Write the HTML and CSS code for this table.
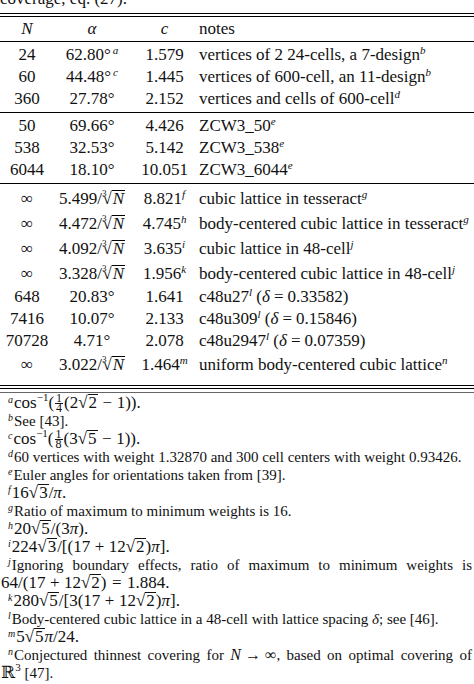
FILE: index.html
```html
<!DOCTYPE html>
<html lang="en">
<head>
<meta charset="utf-8">
<title>Table</title>
<link rel="stylesheet" href="styles.css">
</head>
<body>
<div class="page">
  <p class="caption">coverage, eq. (27).</p>
  <div class="rule-double"></div>
  <div class="row head">
    <span class="cn"><i>N</i></span><span class="ca"><i>α</i></span><span class="cc"><i>c</i></span><span class="cnotes">notes</span>
  </div>
  <div class="rule"></div>

  <div class="group">
    <div class="row"><span class="cn">24</span><span class="ca">62.80°<sup class="s sm">a</sup></span><span class="cc">1.579</span><span class="cnotes">vertices of 2 24-cells, a 7-design<sup class="s">b</sup></span></div>
    <div class="row"><span class="cn">60</span><span class="ca">44.48°<sup class="s sm">c</sup></span><span class="cc">1.445</span><span class="cnotes">vertices of 600-cell, an 11-design<sup class="s">b</sup></span></div>
    <div class="row"><span class="cn">360</span><span class="ca">27.78°</span><span class="cc">2.152</span><span class="cnotes">vertices and cells of 600-cell<sup class="s">d</sup></span></div>
  </div>
  <div class="rule"></div>

  <div class="group">
    <div class="row"><span class="cn">50</span><span class="ca">69.66°</span><span class="cc">4.426</span><span class="cnotes">ZCW3_50<sup class="s">e</sup></span></div>
    <div class="row"><span class="cn">538</span><span class="ca">32.53°</span><span class="cc">5.142</span><span class="cnotes">ZCW3_538<sup class="s">e</sup></span></div>
    <div class="row"><span class="cn">6044</span><span class="ca">18.10°</span><span class="cc">10.051</span><span class="cnotes">ZCW3_6044<sup class="s">e</sup></span></div>
  </div>
  <div class="rule"></div>

  <div class="group">
    <div class="row tall"><span class="cn">∞</span><span class="ca">5.499/<span class="root"><span class="idx">3</span><span class="rs">√</span><span class="rad"><i>N</i></span></span></span><span class="cc">8.821<sup class="s">f</sup></span><span class="cnotes">cubic lattice in tesseract<sup class="s">g</sup></span></div>
    <div class="row tall"><span class="cn">∞</span><span class="ca">4.472/<span class="root"><span class="idx">3</span><span class="rs">√</span><span class="rad"><i>N</i></span></span></span><span class="cc">4.745<sup class="s">h</sup></span><span class="cnotes">body-centered cubic lattice in tesseract<sup class="s">g</sup></span></div>
    <div class="row tall"><span class="cn">∞</span><span class="ca">4.092/<span class="root"><span class="idx">3</span><span class="rs">√</span><span class="rad"><i>N</i></span></span></span><span class="cc">3.635<sup class="s">i</sup></span><span class="cnotes">cubic lattice in 48-cell<sup class="s">j</sup></span></div>
    <div class="row tall"><span class="cn">∞</span><span class="ca">3.328/<span class="root"><span class="idx">3</span><span class="rs">√</span><span class="rad"><i>N</i></span></span></span><span class="cc">1.956<sup class="s">k</sup></span><span class="cnotes">body-centered cubic lattice in 48-cell<sup class="s">j</sup></span></div>
    <div class="row"><span class="cn">648</span><span class="ca">20.83°</span><span class="cc">1.641</span><span class="cnotes">c48u27<sup class="s">l</sup> (<i>δ</i><span class="rel">=</span>0.33582)</span></div>
    <div class="row"><span class="cn">7416</span><span class="ca">10.07°</span><span class="cc">2.133</span><span class="cnotes">c48u309<sup class="s">l</sup> (<i>δ</i><span class="rel">=</span>0.15846)</span></div>
    <div class="row"><span class="cn">70728</span><span class="ca">4.71°</span><span class="cc">2.078</span><span class="cnotes">c48u2947<sup class="s">l</sup> (<i>δ</i><span class="rel">=</span>0.07359)</span></div>
    <div class="row tall"><span class="cn">∞</span><span class="ca">3.022/<span class="root"><span class="idx">3</span><span class="rs">√</span><span class="rad"><i>N</i></span></span></span><span class="cc">1.464<sup class="s">m</sup></span><span class="cnotes">uniform body-centered cubic lattice<sup class="s">n</sup></span></div>
  </div>
  <div class="rule-bottom"></div>

  <div class="foot">
    <p class="fn"><sup class="fs">a</sup><span class="m">cos<sup class="ex">−1</sup>(<span class="frac"><span>1</span><span>4</span></span>(2<span class="sq"><span class="rs2">√</span><span class="rad2">2</span></span><span class="op">−</span>1)).</span></p>
    <p class="fn"><sup class="fs">b</sup>See [43].</p>
    <p class="fn"><sup class="fs">c</sup><span class="m">cos<sup class="ex">−1</sup>(<span class="frac"><span>1</span><span>8</span></span>(3<span class="sq"><span class="rs2">√</span><span class="rad2">5</span></span><span class="op">−</span>1)).</span></p>
    <p class="fn"><sup class="fs">d</sup>60 vertices with weight 1.32870 and 300 cell centers with weight 0.93426.</p>
    <p class="fn"><sup class="fs">e</sup>Euler angles for orientations taken from [39].</p>
    <p class="fn"><sup class="fs">f</sup><span class="m">16<span class="sq"><span class="rs2">√</span><span class="rad2">3</span></span>/<i>π</i>.</span></p>
    <p class="fn"><sup class="fs">g</sup>Ratio of maximum to minimum weights is 16.</p>
    <p class="fn"><sup class="fs">h</sup><span class="m">20<span class="sq"><span class="rs2">√</span><span class="rad2">5</span></span>/(3<i>π</i>).</span></p>
    <p class="fn"><sup class="fs">i</sup><span class="m">224<span class="sq"><span class="rs2">√</span><span class="rad2">3</span></span>/[(17<span class="op">+</span>12<span class="sq"><span class="rs2">√</span><span class="rad2">2</span></span>)<i>π</i>].</span></p>
    <p class="fn just"><sup class="fs">j</sup>Ignoring boundary effects, ratio of maximum to minimum weights is <span class="m nw">64/(17<span class="op">+</span>12<span class="sq"><span class="rs2">√</span><span class="rad2">2</span></span>)<span class="rel">=</span>1.884.</span></p>
    <p class="fn"><sup class="fs">k</sup><span class="m">280<span class="sq"><span class="rs2">√</span><span class="rad2">5</span></span>/[3(17<span class="op">+</span>12<span class="sq"><span class="rs2">√</span><span class="rad2">2</span></span>)<i>π</i>].</span></p>
    <p class="fn"><sup class="fs">l</sup>Body-centered cubic lattice in a 48-cell with lattice spacing <i>δ</i>; see [46].</p>
    <p class="fn"><sup class="fs">m</sup><span class="m">5<span class="sq"><span class="rs2">√</span><span class="rad2">5</span></span><i>π</i>/24.</span></p>
    <p class="fn just"><sup class="fs">n</sup>Conjectured thinnest covering for <span class="m mn"><i>N</i><span class="rel">→</span>∞</span>, based on optimal covering of <span class="nw"><span class="m">ℝ<sup class="ex">3</sup></span> [47].</span></p>
  </div>
</div>
</body>
</html>
```

FILE: styles.css
```css
html, body {
  margin: 0;
  padding: 0;
  background: #ffffff;
}

body {
  font-family: "Liberation Serif", "DejaVu Serif", serif;
  color: #111111;
  width: 474px;
  height: 684px;
  overflow: hidden;
}

.page {
  width: 474px;
}

.caption {
  margin: -11px 0 4px 0;
  font-size: 17px;
  line-height: 20px;
}

.rule-double {
  height: 2px;
  border-top: 1px solid #000;
  border-bottom: 1px solid #000;
}

.rule {
  height: 1px;
  background: #000;
}

.rule-bottom {
  height: 2px;
  border-top: 1px solid #000;
  border-bottom: 1px solid #000;
  margin-top: 6px;
}

.row {
  display: grid;
  grid-template-columns: 54px 76px 69px 1fr;
  height: 22px;
  align-items: center;
  font-size: 17px;
  line-height: 20px;
  white-space: nowrap;
}

.row.head {
  height: 24px;
}

.row.tall {
  height: 25px;
}

.group {
  padding: 2px 0 2px 0;
}

.cn, .ca, .cc {
  text-align: center;
}

.cnotes {
  text-align: left;
}

.s {
  font-style: italic;
  font-size: 11px;
  line-height: 0;
  vertical-align: 6px;
}

.s.sm {
  margin-left: 2px;
}

.rel {
  margin: 0 4px;
}

.op {
  margin: 0 4.5px;
}

.root {
  display: inline-block;
  white-space: nowrap;
}

.idx {
  display: inline-block;
  font-size: 9px;
  line-height: 0;
  vertical-align: 8px;
  margin-right: -4px;
}

.rs {
  display: inline-block;
}

.rad {
  display: inline-block;
  line-height: 15px;
  border-top: 1px solid #000;
  padding: 0 1px;
}

.foot {
  font-size: 15px;
  line-height: 18px;
  padding: 1px 2px 0 1px;
  border-top: 1px solid #666;
  margin-top: 3px;
}

.fn {
  margin: 0;
  text-indent: 7px;
}

.fn.just {
  text-align: justify;
}

.fs {
  font-style: italic;
  font-size: 10px;
  line-height: 0;
  vertical-align: 5px;
  margin-right: 1px;
}

.m {
  font-size: 17px;
  line-height: 15px;
}

.m.mn {
  font-size: 16px;
}

.m .rel {
  margin: 0 5.5px;
}

.m.mn .rel {
  margin: 0 4px;
}

.ex {
  font-size: 11px;
  line-height: 0;
  vertical-align: 7px;
}

.frac {
  display: inline-flex;
  flex-direction: column;
  vertical-align: 6px;
  font-size: 12px;
  line-height: 9px;
  text-align: center;
  text-indent: 0;
  margin: -5px 1px;
}

.frac span {
  padding: 0 1px;
}

.frac span:first-child {
  border-bottom: 1px solid #111;
}

.sq {
  display: inline-block;
  text-indent: 0;
  white-space: nowrap;
  line-height: 15px;
}

.rs2 {
  display: inline-block;
}

.rad2 {
  display: inline-block;
  line-height: 15px;
  border-top: 1px solid #111;
  padding: 0 1px;
}

.nw {
  white-space: nowrap;
}
```
